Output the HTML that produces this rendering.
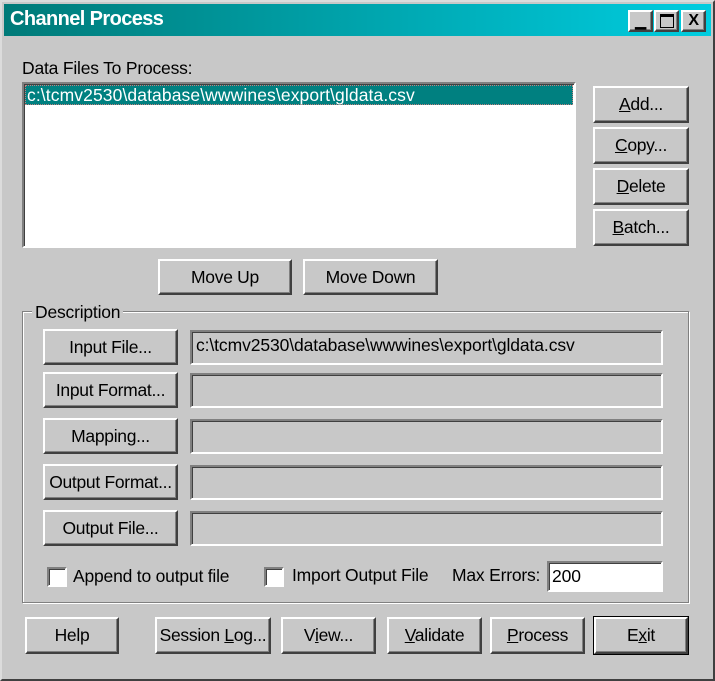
<!DOCTYPE html><html><head><style>
body{margin:0;width:715px;height:681px;background:#fff;overflow:hidden;font-family:"Liberation Sans",sans-serif}
.win{position:absolute;left:0;top:0;width:711px;height:677px;background:#c8c8c8;border:2px solid;border-color:#dcdcdc #404040 #404040 #dcdcdc}
.a{position:absolute;box-sizing:border-box}
.t{font-size:17.5px;letter-spacing:-0.2px;color:#000;white-space:nowrap}
.btn{position:absolute;box-sizing:border-box;background:#c8c8c8;border:2px solid;border-color:#fff #404040 #404040 #fff;box-shadow:inset -1px -1px 0 #808080;display:flex;align-items:center;justify-content:center;font-size:17.5px;letter-spacing:-0.3px}
.fld{position:absolute;box-sizing:border-box;border:2px solid;border-color:#808080 #fff #fff #808080;box-shadow:inset 1px 1px 0 #404040;background:#c8c8c8;font-size:17.5px;letter-spacing:-0.1px;padding:3px 4px;white-space:nowrap}
.cb{position:absolute;width:20px;height:20px;box-sizing:border-box;background:#fff;border:2px solid;border-color:#808080 #fff #fff #808080;box-shadow:inset 1px 1px 0 #404040}
u{text-decoration:underline}
</style></head><body>
<div class="win"></div>
<div class="a" style="left:4px;top:4px;width:707px;height:32px;background:linear-gradient(90deg,#007a78,#00cde0)"></div>
<div class="a" style="left:10px;top:8px;color:#fff;font-weight:bold;font-size:20px;letter-spacing:-0.6px">Channel Process</div>
<div class="btn" style="left:628px;top:10px;width:25px;height:22px;align-items:flex-end;font-weight:bold;font-size:14px">▁</div>
<div class="btn" style="left:654px;top:10px;width:25px;height:22px"><div style="width:12px;height:10px;border:1px solid #000;border-top-width:3px"></div></div>
<div class="btn" style="left:681px;top:10px;width:25px;height:22px;font-weight:bold;font-size:16px">X</div>

<div class="a t" style="left:22px;top:58px">Data Files To Process:</div>
<div class="a" style="left:22px;top:82px;width:554px;height:166px;background:#fff;border:2px solid;border-color:#808080 #fff #fff #808080;box-shadow:inset 1px 1px 0 #404040"></div>
<div class="a t" style="left:25px;top:85px;width:548px;height:20px;background:#008080;color:#fff;padding-left:2px;line-height:20px;outline:1px dotted #c08080;outline-offset:-1px;letter-spacing:0.1px">c:\tcmv2530\database\wwwines\export\gldata.csv</div>

<div class="btn" style="left:593px;top:86px;width:96px;height:37px"><span><u>A</u>dd...</span></div>
<div class="btn" style="left:593px;top:127px;width:96px;height:37px"><span><u>C</u>opy...</span></div>
<div class="btn" style="left:593px;top:168px;width:96px;height:37px"><span><u>D</u>elete</span></div>
<div class="btn" style="left:593px;top:209px;width:96px;height:37px"><span><u>B</u>atch...</span></div>

<div class="btn" style="left:158px;top:259px;width:134px;height:36px">Move Up</div>
<div class="btn" style="left:303px;top:259px;width:135px;height:36px">Move Down</div>

<div class="a" style="left:22px;top:311px;width:667px;height:292px;border:1px solid #808080;box-shadow:1px 1px 0 #fff,inset 1px 1px 0 #fff"></div>
<div class="a t" style="left:32px;top:302px;background:#c8c8c8;padding:0 3px">Description</div>

<div class="btn" style="left:43px;top:329px;width:135px;height:36px">Input File...</div>
<div class="btn" style="left:43px;top:372px;width:135px;height:36px">Input Format...</div>
<div class="btn" style="left:43px;top:418px;width:135px;height:36px">Mapping...</div>
<div class="btn" style="left:43px;top:464px;width:135px;height:36px">Output Format...</div>
<div class="btn" style="left:43px;top:510px;width:135px;height:36px">Output File...</div>

<div class="fld" style="left:190px;top:330px;width:473px;height:35px">c:\tcmv2530\database\wwwines\export\gldata.csv</div>
<div class="fld" style="left:190px;top:373px;width:473px;height:35px"></div>
<div class="fld" style="left:190px;top:419px;width:473px;height:35px"></div>
<div class="fld" style="left:190px;top:465px;width:473px;height:35px"></div>
<div class="fld" style="left:190px;top:511px;width:473px;height:35px"></div>

<div class="cb" style="left:47px;top:567px"></div>
<div class="a t" style="left:73px;top:566px">Append to output file</div>
<div class="cb" style="left:264px;top:567px"></div>
<div class="a t" style="left:292px;top:565px">Import Output File</div>
<div class="a t" style="left:452px;top:565px">Max Errors:</div>
<div class="fld" style="left:547px;top:561px;width:116px;height:31px;background:#fff;padding:3px 3px">200</div>

<div class="btn" style="left:25px;top:617px;width:94px;height:37px">Help</div>
<div class="btn" style="left:155px;top:617px;width:116px;height:37px"><span>Session <u>L</u>og...</span></div>
<div class="btn" style="left:281px;top:617px;width:95px;height:37px"><span>V<u>i</u>ew...</span></div>
<div class="btn" style="left:387px;top:617px;width:95px;height:37px"><span><u>V</u>alidate</span></div>
<div class="btn" style="left:490px;top:617px;width:95px;height:37px"><span><u>P</u>rocess</span></div>
<div class="a" style="left:593px;top:616px;width:96px;height:39px;border:1px solid #000"></div>
<div class="btn" style="left:594px;top:617px;width:94px;height:37px"><span>E<u>x</u>it</span></div>
</body></html>
